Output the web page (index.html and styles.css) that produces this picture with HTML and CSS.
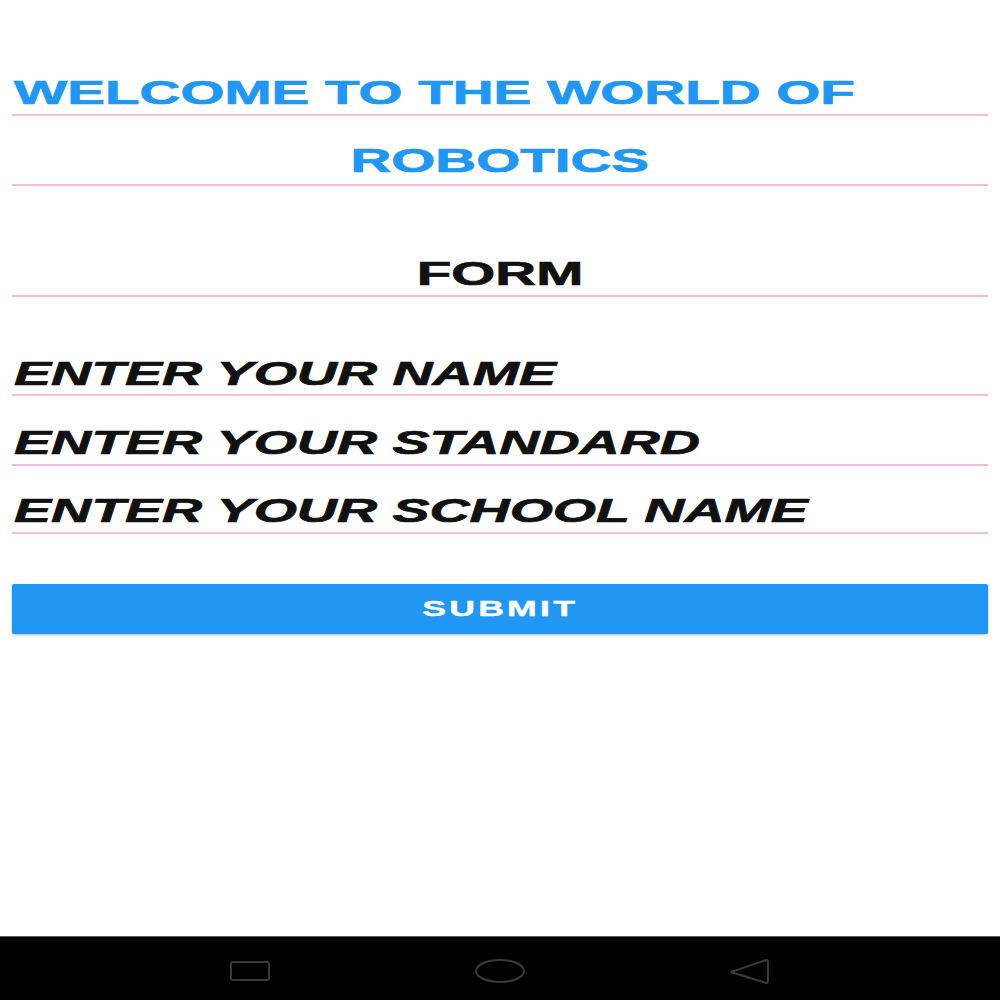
FILE: index.html
```html
<!DOCTYPE html>
<html>
<head>
<meta charset="utf-8">
<link rel="stylesheet" href="styles.css">
</head>
<body>
<div class="screen">
  <main class="content">
    <div class="row row-1 title"><span class="stretch left">WELCOME TO THE WORLD OF</span></div>
    <div class="row row-2 title center"><span class="stretch">ROBOTICS</span></div>
    <div class="row row-3 heading center"><span class="stretch">FORM</span></div>
    <div class="row row-4 field"><span class="stretch left">ENTER YOUR NAME</span></div>
    <div class="row row-5 field"><span class="stretch left">ENTER YOUR STANDARD</span></div>
    <div class="row row-6 field"><span class="stretch left">ENTER YOUR SCHOOL NAME</span></div>
    <button class="submit"><span class="btn-text">SUBMIT</span></button>
  </main>
  <nav class="navbar">
    <div class="nav-item">
      <svg width="44" height="24" viewBox="0 0 44 24"><rect x="3" y="3" width="38" height="18" rx="2" fill="none" stroke="#3a3a3a" stroke-width="2"/></svg>
    </div>
    <div class="nav-item">
      <svg width="56" height="28" viewBox="0 0 56 28"><ellipse cx="28" cy="14" rx="24" ry="11" fill="none" stroke="#3a3a3a" stroke-width="2"/></svg>
    </div>
    <div class="nav-item">
      <svg width="48" height="28" viewBox="0 0 48 28"><path d="M5 15 L40 3 Q42 3 42 5 L42 24 Q42 26 40 26 Z" fill="none" stroke="#3a3a3a" stroke-width="2" stroke-linejoin="round"/></svg>
    </div>
  </nav>
</div>
</body>
</html>
```
FILE: styles.css
```css
html, body {
  margin: 0;
  padding: 0;
  background: #ffffff;
}
.screen {
  width: 1000px;
  height: 1000px;
  display: flex;
  flex-direction: column;
  overflow: hidden;
}
.content {
  padding: 64px 12px 0 12px;
  display: flex;
  flex-direction: column;
}
.row {
  box-sizing: border-box;
  border-bottom: 2px solid #f5bdd3;
  font-family: "Liberation Sans", Arial, sans-serif;
  font-weight: bold;
  font-size: 34px;
  line-height: 35px;
  white-space: nowrap;
  -webkit-text-stroke: 0.7px currentColor;
}
.center { text-align: center; }
.title { color: #2196f3; }
.heading { color: #111111; }
.field { color: #111111; font-style: italic; }
.stretch {
  display: inline-block;
  transform: scaleX(1.663);
  transform-origin: center;
}
.stretch.left {
  transform-origin: left;
  margin-left: 2px;
}
.field .stretch {
  transform: scaleX(1.633);
}
.row-1 { height: 52px; padding-top: 11px; }
.row-2 { height: 70px; padding-top: 27px; }
.row-3 { height: 111px; padding-top: 70px; }
.row-4 { height: 99px; padding-top: 59px; }
.row-5 { height: 70px; padding-top: 29px; }
.row-6 { height: 68px; padding-top: 27px; }
.submit {
  margin-top: 50px;
  height: 50px;
  width: 100%;
  border: none;
  border-radius: 2px;
  background: #2196f3;
  box-shadow: 0 1px 3px rgba(0,0,0,0.3);
  color: #ffffff;
  font-family: "Liberation Sans", Arial, sans-serif;
  font-weight: bold;
  font-size: 22px;
  padding: 0;
  -webkit-text-stroke: 0.4px #ffffff;
}
.btn-text {
  display: inline-block;
  transform: scaleX(1.62);
  letter-spacing: 2px;
}
.navbar {
  margin-top: auto;
  height: 63px;
  background: #000000;
  border-top: 1px solid #555;
  display: flex;
  justify-content: center;
  align-items: center;
}
.nav-item {
  width: 250px;
  display: flex;
  justify-content: center;
  align-items: center;
  padding-top: 4px;
}
```
